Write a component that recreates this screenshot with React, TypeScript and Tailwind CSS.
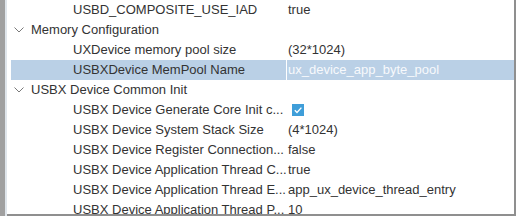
import React from "react";

type Row = {
  label: string;
  value?: string;
  group?: boolean;
  checkbox?: boolean;
  selected?: boolean;
};

const rows: Row[] = [
  { label: "USBD_COMPOSITE_USE_IAD", value: "true" },
  { label: "Memory Configuration", group: true },
  { label: "UXDevice memory pool size", value: "(32*1024)" },
  { label: "USBXDevice MemPool Name", value: "ux_device_app_byte_pool", selected: true },
  { label: "USBX Device Common Init", group: true },
  { label: "USBX Device Generate Core Init c...", checkbox: true },
  { label: "USBX Device System Stack Size", value: "(4*1024)" },
  { label: "USBX Device Register Connection...", value: "false" },
  { label: "USBX Device Application Thread C...", value: "true" },
  { label: "USBX Device Application Thread E...", value: "app_ux_device_thread_entry" },
  { label: "USBX Device Application Thread P...", value: "10" },
];

function Chevron() {
  return (
    <svg width="10" height="6" viewBox="0 0 10 6" className="shrink-0">
      <path d="M0.5 0.5 L5 5 L9.5 0.5" fill="none" stroke="#7a7a7a" strokeWidth="1" />
    </svg>
  );
}

function Check() {
  return (
    <div className="flex h-[12px] w-[12px] items-center justify-center bg-[#3f9ed9]">
      <svg width="10" height="10" viewBox="0 0 10 10">
        <path d="M1.8 5.2 L4 7.4 L8.4 2.6" fill="none" stroke="#ffffff" strokeWidth="1.4" />
      </svg>
    </div>
  );
}

export default function App() {
  return (
    <div
      className="flex h-[216px] w-[516px] overflow-hidden bg-white text-[13px] text-[#333333]"
      style={{ fontFamily: '"Liberation Sans", Arial, sans-serif' }}
    >
      <div className="w-[5px] shrink-0 bg-[#a0a0a0]" />
      <div className="w-[2px] shrink-0 bg-[#dfe5eb]" />
      <div className="flex min-w-0 flex-1 flex-col">
        <div className="flex-1 overflow-hidden pl-[4px]">
          {rows.map((row) => (
            <div
              key={row.label}
              className={
                "flex h-[20px] items-center whitespace-nowrap leading-[20px] " +
                (row.selected ? "bg-[#bad0e6]" : "")
              }
            >
              <div className="flex h-full w-[275px] shrink-0 items-center overflow-hidden">
                {row.group ? (
                  <div className="flex items-center pl-[3px]">
                    <Chevron />
                    <span className="pl-[7px]">{row.label}</span>
                  </div>
                ) : (
                  <span className="pl-[62px]">{row.label}</span>
                )}
              </div>
              <div className={"h-full w-[1px] shrink-0 " + (row.selected ? "bg-white" : "")} />
              <div className="flex h-full min-w-0 flex-1 items-center pl-[1px]">
                {row.checkbox ? (
                  <div className="pl-[4px]">
                    <Check />
                  </div>
                ) : (
                  <span className={row.selected ? "text-[#f7f9fc]" : ""}>{row.value}</span>
                )}
              </div>
            </div>
          ))}
        </div>
        <div className="h-[2px] shrink-0 bg-[#8f8f8f]" />
      </div>
      <div className="w-[2px] shrink-0 bg-[#8f8f8f]" />
    </div>
  );
}
